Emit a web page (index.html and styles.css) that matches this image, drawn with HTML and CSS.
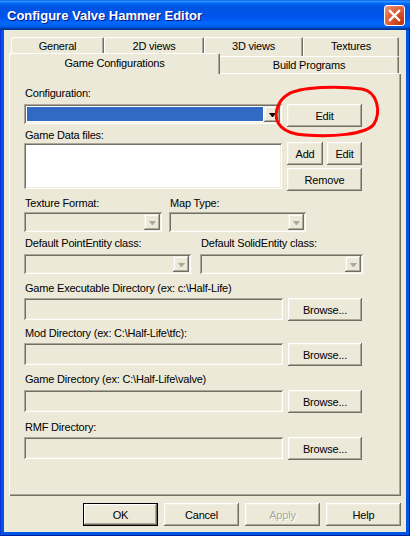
FILE: index.html
```html
<!DOCTYPE html>
<html lang="en">
<head>
  <meta charset="UTF-8" />
  <title>Configure Valve Hammer Editor</title>
  <link rel="stylesheet" href="styles.css">
</head>
<body>
  <div class="window">
    <div class="titlebar">
      <span class="title">Configure Valve Hammer Editor</span>
      <span class="close-btn">
        <svg width="19" height="19" viewBox="0 0 19 19">
          <path d="M5 5 L14 14 M14 5 L5 14" stroke="#fff" stroke-width="2.4" stroke-linecap="square" />
        </svg>
      </span>
    </div>

    <div class="client">
      <div class="tabstrip">
        <div class="tab-row back">
          <div class="tab t-general">General</div>
          <div class="tab t-2d">2D views</div>
          <div class="tab t-3d">3D views</div>
          <div class="tab t-textures">Textures</div>
        </div>
        <div class="tab-row front">
          <div class="tab active t-game">Game Configurations</div>
          <div class="tab t-build">Build Programs</div>
        </div>
      </div>

      <div class="tab-panel">
        <div class="group g-config">
          <div class="label">Configuration:</div>
          <div class="row">
            <div class="combo combo-config">
              <div class="combo-value selected"></div>
              <div class="combo-arrow"></div>
            </div>
            <button class="btn btn-wide">Edit</button>
          </div>
        </div>

        <div class="group g-data">
          <div class="label">Game Data files:</div>
          <div class="row">
            <div class="listbox"></div>
            <div class="list-buttons">
              <div class="list-buttons-top">
                <button class="btn btn-add">Add</button>
                <button class="btn btn-edit-small">Edit</button>
              </div>
              <button class="btn btn-wide">Remove</button>
            </div>
          </div>
        </div>

        <div class="group g-texture">
          <div class="col col-texture">
            <div class="label">Texture Format:</div>
            <div class="combo disabled"><div class="combo-value"></div><div class="combo-arrow"></div></div>
          </div>
          <div class="col col-map">
            <div class="label">Map Type:</div>
            <div class="combo disabled"><div class="combo-value"></div><div class="combo-arrow"></div></div>
          </div>
        </div>

        <div class="group g-entity">
          <div class="col col-point">
            <div class="label">Default PointEntity class:</div>
            <div class="combo disabled"><div class="combo-value"></div><div class="combo-arrow"></div></div>
          </div>
          <div class="col col-solid">
            <div class="label">Default SolidEntity class:</div>
            <div class="combo disabled"><div class="combo-value"></div><div class="combo-arrow"></div></div>
          </div>
        </div>

        <div class="group g-exe">
          <div class="label">Game Executable Directory (ex: c:\Half-Life)</div>
          <div class="row">
            <div class="field"></div>
            <button class="btn btn-browse">Browse...</button>
          </div>
        </div>

        <div class="group g-mod">
          <div class="label">Mod Directory (ex: C:\Half-Life\tfc):</div>
          <div class="row">
            <div class="field"></div>
            <button class="btn btn-browse">Browse...</button>
          </div>
        </div>

        <div class="group g-game">
          <div class="label">Game Directory (ex: C:\Half-Life\valve)</div>
          <div class="row">
            <div class="field"></div>
            <button class="btn btn-browse">Browse...</button>
          </div>
        </div>

        <div class="group g-rmf">
          <div class="label">RMF Directory:</div>
          <div class="row">
            <div class="field"></div>
            <button class="btn btn-browse">Browse...</button>
          </div>
        </div>
      </div>

      <div class="dialog-buttons">
        <button class="btn btn-dialog default">OK</button>
        <button class="btn btn-dialog">Cancel</button>
        <button class="btn btn-dialog disabled">Apply</button>
        <button class="btn btn-dialog">Help</button>
      </div>
    </div>

    <!-- red marker drawn round the Edit button -->
    <svg class="marker" width="410" height="536" viewBox="0 0 410 536">
      <path d="M287 95 C300 86 340 86 362 89 C378 92 381 112 374 124 C366 135 330 137 305 135 C283 134 273 123 277 109 C279 102 282 98 290 93"
            fill="none" stroke="#ff0000" stroke-width="3" stroke-linecap="round" />
    </svg>
  </div>
</body>
</html>
```

FILE: styles.css
```css
body {
  margin: 0;
  font-family: "Liberation Sans", Arial, sans-serif;
  font-size: 11px;
  letter-spacing: -0.2px;
  color: #000;
}

.window {
  position: relative;
  width: 410px;
  height: 536px;
  display: flex;
  flex-direction: column;
  background: #0055e5;
  box-shadow: inset 1px 0 #0831d9, inset -1px 0 #001ea0, inset 0 -1px #001ea0;
}

.titlebar {
  height: 30px;
  flex-shrink: 0;
  display: flex;
  align-items: center;
  justify-content: space-between;
  padding: 0 5px 0 7px;
  background: linear-gradient(to bottom,
    #0058ee 0%, #3593ff 4%, #288eff 6%, #127dff 8%, #036ffc 10%,
    #0262ee 14%, #0057e5 20%, #0054e3 24%, #0055eb 56%, #005bf5 66%,
    #026afe 76%, #0062ef 86%, #0052d6 92%, #0040ab 94%, #003092 100%);
}

.title {
  color: #fff;
  font-weight: bold;
  font-size: 13px;
  letter-spacing: 0;
  text-shadow: 1px 1px #0a1883;
}

.close-btn {
  width: 21px;
  height: 21px;
  box-sizing: border-box;
  border: 1px solid #fff;
  border-radius: 3px;
  display: flex;
  align-items: center;
  justify-content: center;
  background: radial-gradient(circle at 85% 85%, #c2350b 0%, #d8552e 45%, #e3714f 70%, #f0a088 100%);
}

.client {
  flex: 1;
  margin: 0 4px 4px;
  background: #ece9d8;
  display: flex;
  flex-direction: column;
}

/* tabs */

.tabstrip {
  padding-top: 7px;
}

.tab-row {
  display: flex;
  align-items: flex-start;
  padding-left: 7px;
}

.tab {
  box-sizing: border-box;
  background: #ece9d8;
  text-align: center;
  border-radius: 2px 2px 0 0;
  box-shadow: inset 1px 1px #fff, inset -1px 0 #716f64, inset -2px 0 #aca899;
}

.tab-row.back .tab {
  height: 19px;
  line-height: 19px;
}

.tab-row.front .tab {
  height: 17px;
  line-height: 16px;
  padding-top: 1px;
}

.t-general { width: 93px; }
.t-2d { width: 100px; }
.t-3d { width: 99px; }
.t-textures { width: 96px; }
.t-build { width: 180px; }

.tab-row.front .tab.active {
  position: relative;
  z-index: 1;
  width: 211px;
  height: 21px;
  margin: -3px -1px -1px -2px;
  line-height: 18px;
}

.tab-panel {
  box-sizing: border-box;
  width: 392px;
  height: 423px;
  margin-left: 5px;
  padding: 1px 0 0 15px;
  box-shadow: inset 1px 1px #fff, inset -1px -1px #716f64, inset -2px -2px #aca899;
}

/* form groups */

.label {
  height: 13px;
  line-height: 13px;
  margin-bottom: 3px;
  padding-left: 1px;
  white-space: nowrap;
}

.row {
  display: flex;
  align-items: flex-start;
  gap: 5px;
}

.g-config { margin-top: 13px; }
.g-config .label { margin-bottom: 4px; }

.g-data { margin-top: 2px; }
.g-data .label { margin-bottom: 0; }

.g-texture,
.g-entity {
  display: flex;
}

.g-texture { margin-top: 6px; gap: 7px; }
.g-texture .label { margin-bottom: 2px; }
.col-texture { width: 138px; }
.col-map { width: 137px; }

.g-entity { margin-top: 5px; gap: 9px; }
.g-entity .label { margin-bottom: 4px; }
.col-point { width: 167px; }
.col-solid { width: 163px; }

.g-exe { margin-top: 8px; }
.g-mod { margin-top: 6px; }
.g-game { margin-top: 7px; }
.g-game .label { margin-bottom: 4px; }
.g-rmf { margin-top: 8px; }

/* sunken controls */

.combo,
.field,
.listbox {
  box-sizing: border-box;
  box-shadow: inset 1px 1px #aca899, inset -1px -1px #fff, inset 2px 2px #716f64, inset -2px -2px #f1efe2;
}

.combo {
  height: 20px;
  display: flex;
  padding: 2px;
  background: #fff;
}

.combo.disabled {
  background: #ece9d8;
}

.combo-config {
  width: 258px;
}

.combo-value {
  flex: 1;
  margin: 1px;
}

.combo-value.selected {
  background: #316ac5;
}

.combo-arrow {
  width: 16px;
  height: 16px;
  box-sizing: border-box;
  display: flex;
  align-items: center;
  justify-content: center;
  background: #ece9d8;
  box-shadow: inset -1px -1px #716f64, inset 1px 1px #f1efe2, inset -2px -2px #aca899, inset 2px 2px #fff;
}

.combo-arrow::after {
  content: "";
  width: 1px;
  height: 0;
  margin-top: 1px;
  border-left: 3px solid transparent;
  border-right: 3px solid transparent;
  border-top: 4px solid #000;
}

.combo.disabled .combo-arrow::after {
  border-top-color: #aca899;
}

.field {
  width: 259px;
  height: 22px;
  background: #ece9d8;
}

.listbox {
  width: 258px;
  height: 46px;
  margin-top: 1px;
  background: #fff;
}

.list-buttons {
  display: flex;
  flex-direction: column;
  gap: 3px;
}

.list-buttons-top {
  display: flex;
  gap: 4px;
}

/* raised buttons */

.btn {
  box-sizing: border-box;
  height: 23px;
  padding: 0;
  border: none;
  background: #ece9d8;
  font-family: inherit;
  font-size: 11px;
  letter-spacing: inherit;
  color: #000;
  box-shadow: inset -1px -1px #716f64, inset 1px 1px #fff, inset -2px -2px #aca899, inset 2px 2px #f1efe2;
}

.btn-wide { width: 75px; }
.btn-add { width: 36px; }
.btn-edit-small { width: 35px; }
.btn-browse { width: 74px; }

.dialog-buttons {
  display: flex;
  justify-content: flex-end;
  gap: 6px;
  margin-top: 7px;
  padding-right: 5px;
}

.btn-dialog {
  width: 75px;
}

.btn.default {
  box-shadow: inset 0 0 0 1px #000, inset -2px -2px #716f64, inset 2px 2px #fff, inset -3px -3px #aca899, inset 3px 3px #f1efe2;
}

.btn.disabled {
  color: #aca899;
  text-shadow: 1px 1px #fff;
}

.marker {
  position: absolute;
  top: 0;
  left: 0;
  pointer-events: none;
}
```
